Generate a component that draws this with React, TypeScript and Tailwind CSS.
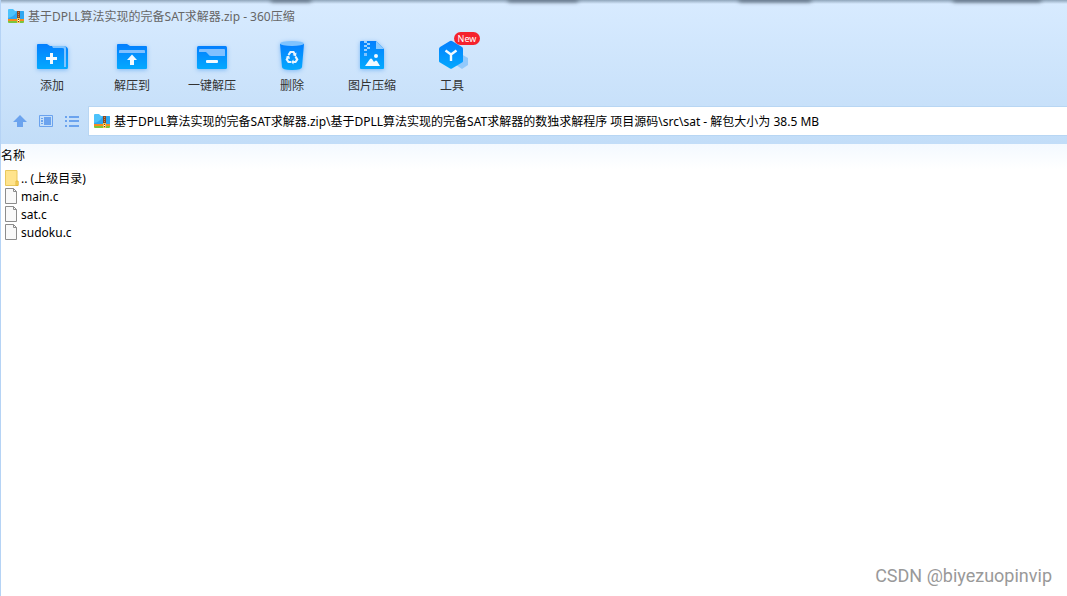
import type { ReactNode } from "react";

function ArchiveIcon() {
  return (
    <svg viewBox="0 0 16 16" className="size-4 shrink-0" aria-hidden="true">
      <path d="M0 2Q0 1 1 1h4l2 2h8q1 0 1 1v7H0z" fill="#4cc2fb" />
      <path d="M0 10Q6 9 9 3h6q1 0 1 1v7H0z" fill="#2fa6f0" />
      <path d="M0 11h16v2H0z" fill="#f78b1e" />
      <path d="M0 13h16v1q0 1-1 1H1q-1 0-1-1z" fill="#7cc53c" />
      <path d="M9 3h3v8H9z" fill="#8a4a22" />
      <path d="M10 4h1v1h-1zM10 6h1v1h-1zM10 8h1v1h-1z" fill="#c98552" />
      <path d="M9 10h3v5H9z" fill="#f6c655" />
      <path d="M10 11h1v3h-1z" fill="#7a3510" />
      <path d="M10 12h1v1h-1z" fill="#fff" />
    </svg>
  );
}

function Gradient({ id }: { id: string }) {
  return (
    <defs>
      <linearGradient id={id} x1="0" y1="0" x2="0" y2="1">
        <stop offset="0" stopColor="#047ffe" />
        <stop offset="1" stopColor="#04a9fe" />
      </linearGradient>
    </defs>
  );
}

function AddIcon() {
  return (
    <svg viewBox="0 0 32 32" className="size-8 drop-shadow-sm drop-shadow-[#7db8f5]" aria-hidden="true">
      <Gradient id="add" />
      <path d="M1 5q0-1 1-1h9l3 2h13q4 0 5 3v18q0 2-1 2H2q-1 0-1-1z" fill="url(#add)" />
      <path d="M16 6h12q2 0 2 2v19h-2V9q0-1-2-1h-9z" fill="#7fc4ff" />
      <path d="M14 13h3v4h4v3h-4v4h-3v-4h-4v-3h4z" fill="#f3faff" />
    </svg>
  );
}

function ExtractIcon() {
  return (
    <svg viewBox="0 0 32 32" className="size-8 drop-shadow-sm drop-shadow-[#7db8f5]" aria-hidden="true">
      <Gradient id="extract" />
      <path d="M1 5q0-1 1-1h9l3 2h16q1 0 1 1v21q0 1-1 1H2q-1 0-1-1z" fill="url(#extract)" />
      <path d="M4 10h24q1 0 1 1v2H3v-2q0-1 1-1" fill="#80c0ff" />
      <path d="m16 14.500 5 5.500h-3v5h-4v-5h-3z" fill="#f3faff" />
    </svg>
  );
}

function OneKeyIcon() {
  return (
    <svg viewBox="0 0 32 32" className="size-8 drop-shadow-sm drop-shadow-[#7db8f5]" aria-hidden="true">
      <Gradient id="onekey" />
      <rect x="1" y="6" width="30" height="23" rx="1.500" fill="url(#onekey)" />
      <path d="M4 9h24q1 0 1 1v6H15q-2 0-3-2l-2-2H3v-2q0-1 1-1" fill="#80c0ff" />
      <rect x="10" y="20" width="12" height="3" rx="1" fill="#f3faff" />
    </svg>
  );
}

function TrashIcon() {
  return (
    <svg viewBox="0 0 32 32" className="size-8 drop-shadow-sm drop-shadow-[#7db8f5]" aria-hidden="true">
      <Gradient id="trash" />
      <path d="M4 4 6 27q0 3 10 3t10-3l2-23z" fill="url(#trash)" />
      <ellipse cx="16" cy="3.500" rx="12" ry="2.500" fill="#7fc3ff" />
      <g fill="none" stroke="#e9f6ff" strokeWidth="2.200">
        <path d="m12.500 15 2-3h3l1.500 2.500" />
        <path d="m19.500 16.500 1.700 3L19.500 22H17" />
        <path d="M15 22h-2.500l-1.700-2.500 1.700-3" />
      </g>
      <path d="m20.500 12.500-.5 4-3.500-1.500zM17.500 19.500v5L15 22zM9.500 17l3.500-1.500 1 3.500z" fill="#e9f6ff" />
    </svg>
  );
}

function PictureIcon() {
  return (
    <svg viewBox="0 0 32 32" className="size-8 drop-shadow-sm drop-shadow-[#7db8f5]" aria-hidden="true">
      <Gradient id="picture" />
      <path d="M4 2q0-1 1-1h15l8 8v19q0 1-1 1H5q-1 0-1-1z" fill="url(#picture)" />
      <path d="M20 1v8h8z" fill="#8bcaff" />
      <path d="M8 1h3v2H8zM11 3h3v2h-3zM8 5h3v2H8zM11 7h3v2h-3zM8 9h3v2H8z" fill="#9bd0ff" />
      <path d="M8 13h3v3H8z" fill="#7fc3ff" />
      <circle cx="20" cy="16" r="2" fill="#f3faff" />
      <path d="m9 26 5-7q1-1 2 0l2 3 1-1q1-1 2 0l3 5z" fill="#f3faff" />
    </svg>
  );
}

function ToolsIcon() {
  return (
    <svg viewBox="0 0 32 32" className="size-8" aria-hidden="true">
      <Gradient id="tools" />
      <path d="m25 14 7 4v7l-6 4-6-4v-7z" fill="#92c9fb" />
      <path d="M14 1q1-.5 2 0l10 6q1 .5 1 2v12q0 1-1 1.500l-10 6q-1 .5-2 0l-10-6Q3 22 3 21V9q0-1 1-2z" fill="url(#tools)" />
      <path d="m9.500 10.500 5.500 4 5.500-4M15 14.500V21" fill="none" stroke="#f3faff" strokeWidth="2.400" />
    </svg>
  );
}

const tools: { label: string; icon: ReactNode; badge?: string }[] = [
  { label: "添加", icon: <AddIcon /> },
  { label: "解压到", icon: <ExtractIcon /> },
  { label: "一键解压", icon: <OneKeyIcon /> },
  { label: "删除", icon: <TrashIcon /> },
  { label: "图片压缩", icon: <PictureIcon /> },
  { label: "工具", icon: <ToolsIcon />, badge: "New" },
];

function FolderIcon() {
  return (
    <svg viewBox="0 0 14 18" className="h-[18px] w-3.5" aria-hidden="true">
      <path d="M.5 1.500H12v10l1 1v4H.5z" fill="#ffe48d" stroke="#e9c85c" />
      <path d="M11 12v4.500h2V12z" fill="#ffd968" stroke="#e2b93f" />
    </svg>
  );
}

function FileIcon() {
  return (
    <svg viewBox="0 0 14 18" className="h-[18px] w-3.5" aria-hidden="true">
      <path d="M.5 1.500h8l3 3v12H.5z" fill="#f9f9f9" stroke="#8c8c8c" />
      <path d="M8.500 1.500v3h3" fill="none" stroke="#8c8c8c" />
    </svg>
  );
}

const files = [
  { name: ".. (上级目录)", folder: true },
  { name: "main.c", folder: false },
  { name: "sat.c", folder: false },
  { name: "sudoku.c", folder: false },
];

const shadows = [
  "left-[270px] w-10",
  "left-[507px] w-[70px]",
  "left-[738px] w-[72px]",
  "left-[952px] w-[88px]",
];

export default function App() {
  return (
    <div className="flex min-h-screen flex-col border-l border-[#b5d3f5] bg-white font-['Noto_Sans','Noto_Sans_CJK_SC',sans-serif] text-xs text-black">
      <header className="relative overflow-hidden bg-linear-to-b from-[#d8ebff] to-[#c2ddf8]">
        <div className="absolute inset-x-0 top-0 h-1 bg-linear-to-b from-[#8fa5ba] to-transparent" />
        {shadows.map((s) => (
          <div key={s} className={`absolute -top-0.5 h-1 bg-[#5c6c7e] blur-[2px] ${s}`} />
        ))}
        <div className="flex h-8 items-center gap-1 pl-[7px] text-[#666]">
          <ArchiveIcon />
          <h1 className="pt-0.5">基于DPLL算法实现的完备SAT求解器.zip - 360压缩</h1>
        </div>
        <nav className="flex h-[74px] pt-2 pl-[11px] text-[#333]">
          {tools.map((t) => (
            <button key={t.label} type="button" className="relative flex w-20 flex-col items-center gap-1">
              {t.icon}
              <span className="leading-5">{t.label}</span>
              {t.badge && (
                <span className="absolute -top-2 left-[42px] flex h-[13px] w-[26px] items-center justify-center rounded-full bg-[#f5222d] text-[9px] text-white">
                  {t.badge}
                </span>
              )}
            </button>
          ))}
        </nav>
        <div className="flex items-center pb-2">
          <div className="flex w-[87px] items-center gap-2.5 pl-[11px] text-[#6ba3ee]">
            <button type="button" aria-label="上级目录">
              <svg viewBox="0 0 16 16" className="size-4" fill="currentColor" aria-hidden="true">
                <path d="m8 2 7 7h-4v5H5V9H1z" />
              </svg>
            </button>
            <button type="button" aria-label="预览">
              <svg viewBox="0 0 16 16" className="size-4" fill="currentColor" aria-hidden="true">
                <path d="M1.500 2.500h13v11h-13z" fill="none" stroke="currentColor" />
                <path d="M6 4h7v8H6zM3 5h2v1H3zM3 7h2v2H3zM3 10h2v1H3z" />
              </svg>
            </button>
            <button type="button" aria-label="列表">
              <svg viewBox="0 0 16 16" className="size-4" fill="currentColor" aria-hidden="true">
                <path d="M1 3h2v2H1zM5 3h10v2H5zM1 7h2v2H1zM5 7h10v2H5zM1 12h2v2H1zM5 12h10v2H5z" />
              </svg>
            </button>
          </div>
          <div className="flex h-[30px] flex-1 items-center gap-1 border border-r-0 border-[#b8d6f3] bg-white pl-[5px]">
            <ArchiveIcon />
            <input
              aria-label="路径"
              readOnly
              className="min-w-0 flex-1 bg-transparent pt-0.5 outline-none"
              value="基于DPLL算法实现的完备SAT求解器.zip\基于DPLL算法实现的完备SAT求解器的数独求解程序 项目源码\src\sat - 解包大小为 38.5 MB"
            />
          </div>
        </div>
      </header>
      <main className="flex-1">
        <table className="w-full border-collapse text-left">
          <thead>
            <tr className="bg-linear-to-b from-[#f3f9ff] to-white">
              <th className="h-[25px] p-0 pb-0.5 font-normal">名称</th>
            </tr>
          </thead>
          <tbody>
            {files.map((f) => (
              <tr key={f.name}>
                <td className="p-0">
                  <div className="flex h-[18px] items-center gap-0.5 pl-1">
                    {f.folder ? <FolderIcon /> : <FileIcon />}
                    <span className="pt-0.5">{f.name}</span>
                  </div>
                </td>
              </tr>
            ))}
          </tbody>
        </table>
      </main>
      <footer className="flex justify-end px-[15px] pb-2 font-['Roboto',sans-serif] text-lg leading-6 text-[#999]">
        CSDN @biyezuopinvip
      </footer>
    </div>
  );
}
